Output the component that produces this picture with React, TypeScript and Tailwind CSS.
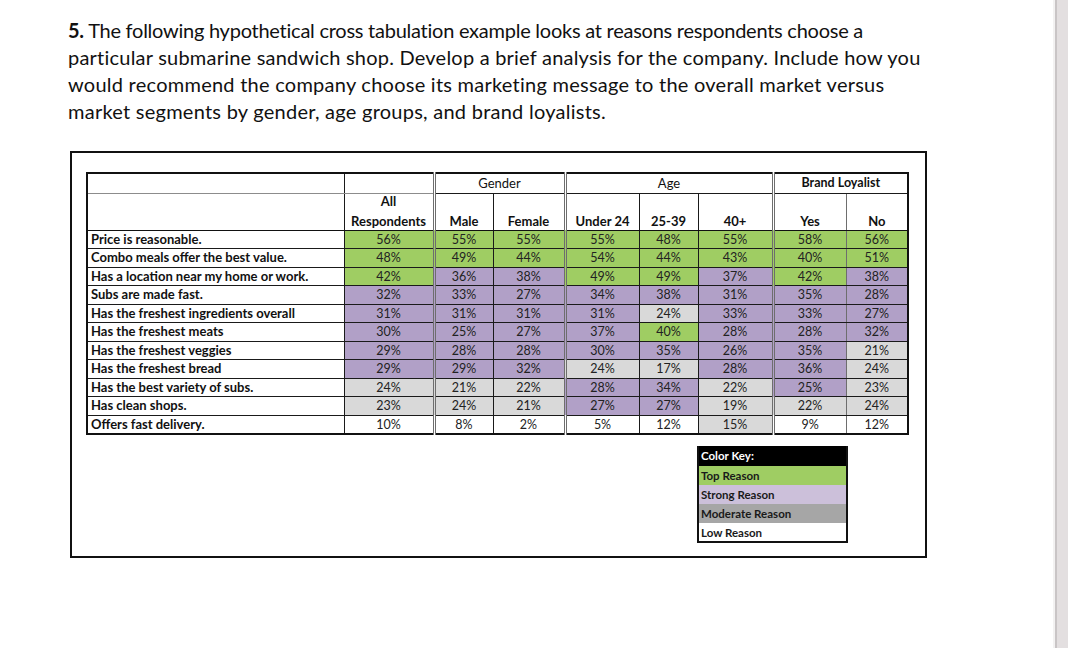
import React from "react";

type C = "G" | "P" | "L" | "W";

const rows: { label: string; cells: [string, C][] }[] = [
  { label: "Price is reasonable.", cells: [["56%", "G"], ["55%", "G"], ["55%", "G"], ["55%", "G"], ["48%", "G"], ["55%", "G"], ["58%", "G"], ["56%", "G"]] },
  { label: "Combo meals offer the best value.", cells: [["48%", "G"], ["49%", "G"], ["44%", "G"], ["54%", "G"], ["44%", "G"], ["43%", "G"], ["40%", "G"], ["51%", "G"]] },
  { label: "Has a location near my home or work.", cells: [["42%", "G"], ["36%", "P"], ["38%", "P"], ["49%", "G"], ["49%", "G"], ["37%", "P"], ["42%", "G"], ["38%", "P"]] },
  { label: "Subs are made fast.", cells: [["32%", "P"], ["33%", "P"], ["27%", "P"], ["34%", "P"], ["38%", "P"], ["31%", "P"], ["35%", "P"], ["28%", "P"]] },
  { label: "Has the freshest ingredients overall", cells: [["31%", "P"], ["31%", "P"], ["31%", "P"], ["31%", "P"], ["24%", "L"], ["33%", "P"], ["33%", "P"], ["27%", "P"]] },
  { label: "Has the freshest meats", cells: [["30%", "P"], ["25%", "P"], ["27%", "P"], ["37%", "P"], ["40%", "G"], ["28%", "P"], ["28%", "P"], ["32%", "P"]] },
  { label: "Has the freshest veggies", cells: [["29%", "P"], ["28%", "P"], ["28%", "P"], ["30%", "P"], ["35%", "P"], ["26%", "P"], ["35%", "P"], ["21%", "L"]] },
  { label: "Has the freshest bread", cells: [["29%", "P"], ["29%", "P"], ["32%", "P"], ["24%", "L"], ["17%", "L"], ["28%", "P"], ["36%", "P"], ["24%", "L"]] },
  { label: "Has the best variety of subs.", cells: [["24%", "L"], ["21%", "L"], ["22%", "L"], ["28%", "P"], ["34%", "P"], ["22%", "L"], ["25%", "P"], ["23%", "L"]] },
  { label: "Has clean shops.", cells: [["23%", "L"], ["24%", "L"], ["21%", "L"], ["27%", "P"], ["27%", "P"], ["19%", "L"], ["22%", "L"], ["24%", "L"]] },
  { label: "Offers fast delivery.", cells: [["10%", "W"], ["8%", "W"], ["2%", "W"], ["5%", "W"], ["12%", "W"], ["15%", "L"], ["9%", "W"], ["12%", "W"]] },
];

const bg: Record<C, string> = {
  G: "bg-[#9fcd63]",
  P: "bg-[#b1a0c7]",
  L: "bg-[#d9d9d9]",
  W: "bg-white",
};

const leftBorder = [
  "border-l border-l-[#1a1a1a]",
  "border-l-[3px] border-l-[#6e6e6e] [border-left-style:double]",
  "border-l border-l-[#1a1a1a]",
  "border-l-[3px] border-l-[#6e6e6e] [border-left-style:double]",
  "border-l border-l-[#1a1a1a]",
  "border-l border-l-[#1a1a1a]",
  "border-l-[3px] border-l-[#6e6e6e] [border-left-style:double]",
  "border-l border-l-[#6e6e6e]",
];

export default function App() {
  return (
    <div className="w-[1068px] h-[648px] bg-white flex overflow-hidden" style={{ fontFamily: "Lato, 'Open Sans', sans-serif" }}>
      <div className="flex-1 flex flex-col pl-[68px] pt-[17px]">
        <div className="text-[20px] leading-[27px] text-[#111]">
          <div className="tracking-[-0.25px]"><span className="font-bold">5.</span> The following hypothetical cross tabulation example looks at reasons respondents choose a</div>
          <div className="tracking-[0.22px]">particular submarine sandwich shop. Develop a brief analysis for the company. Include how you</div>
          <div className="tracking-[0.25px]">would recommend the company choose its marketing message to the overall market versus</div>
          <div className="tracking-[0.25px]">market segments by gender, age groups, and brand loyalists.</div>
        </div>
        <div className="ml-[2px] mt-[26px] w-[857px] h-[407px] border-2 border-[#111] pl-[14px] pt-[19px] flex flex-col">
          <table className="table-fixed border-collapse w-[821px] text-[12.5px] text-[#222] border-2 border-[#111]">
            <colgroup>
              <col className="w-[257px]" />
              <col className="w-[90px]" />
              <col className="w-[59px]" />
              <col className="w-[72px]" />
              <col className="w-[74px]" />
              <col className="w-[59px]" />
              <col className="w-[75px]" />
              <col className="w-[73px]" />
              <col className="w-[62px]" />
            </colgroup>
            <thead>
              <tr className="h-[20px]">
                <td className="border-b border-b-[#8c8c8c] p-0"></td>
                <td className="border-l border-l-[#1a1a1a] border-b border-b-[#8c8c8c] p-0"></td>
                <td colSpan={2} className="border-l-[3px] border-l-[#6e6e6e] [border-left-style:double] border-b border-b-[#1a1a1a] text-center p-0 leading-[18px] text-[13px] text-[#111]">Gender</td>
                <td colSpan={3} className="border-l-[3px] border-l-[#6e6e6e] [border-left-style:double] border-b border-b-[#1a1a1a] text-center p-0 leading-[18px] text-[13px] text-[#111]">Age</td>
                <td colSpan={2} className="border-l-[3px] border-l-[#6e6e6e] [border-left-style:double] border-b border-b-[#1a1a1a] text-center p-0 leading-[18px] font-bold text-[#111]">Brand Loyalist</td>
              </tr>
              <tr className="h-[37px] font-bold text-[13px] text-[#111]">
                <td className="border-b border-b-[#111] p-0"></td>
                <td className="border-l border-l-[#1a1a1a] border-b border-b-[#111] p-0 align-bottom text-center">
                  <div className="leading-[14px]">All</div>
                  <div className="leading-[16px] mt-[5px] pb-[1px]">Respondents</div>
                </td>
                {["Male", "Female", "Under 24", "25-39", "40+", "Yes", "No"].map((h, i) => (
                  <td key={h} className={`${leftBorder[i + 1]} border-b border-b-[#111] p-0 align-bottom text-center`}>
                    <div className="leading-[16px] pb-[1px]">{h}</div>
                  </td>
                ))}
              </tr>
            </thead>
            <tbody>
              {rows.map((r) => (
                <tr key={r.label} className="h-[18.5px]">
                  <td className="border-b border-b-[#1a1a1a] p-0 pl-[3px] font-bold text-[13px] text-[#111] leading-[17px] whitespace-nowrap">{r.label}</td>
                  {r.cells.map(([v, c], i) => (
                    <td key={i} className={`${leftBorder[i]} border-b border-b-[#1a1a1a] p-0 text-center leading-[17px] ${bg[c]}`}>{v}</td>
                  ))}
                </tr>
              ))}
            </tbody>
          </table>
          <div className="ml-[611px] mt-[11px] w-[151px] border-2 border-t-0 border-[#111] text-[11.5px] font-bold leading-[19px] text-[#1a1a1a]">
            <div className="bg-black text-white h-[20px] leading-[20px] pl-[2px]">Color Key:</div>
            <div className="bg-[#9fcd63] h-[19px] pl-[2px]">Top Reason</div>
            <div className="bg-[#ccc0da] h-[19px] pl-[2px]">Strong Reason</div>
            <div className="bg-[#a6a6a6] h-[19px] pl-[2px]">Moderate Reason</div>
            <div className="bg-white h-[18px] pl-[2px]">Low Reason</div>
          </div>
        </div>
      </div>
      <div className="w-[15px] h-full flex">
        <div className="w-[2px] bg-[#f3f2f2]"></div>
        <div className="w-[2px] bg-[#c9c5c6]"></div>
        <div className="flex-1 bg-[#e3dfe0]"></div>
      </div>
    </div>
  );
}
